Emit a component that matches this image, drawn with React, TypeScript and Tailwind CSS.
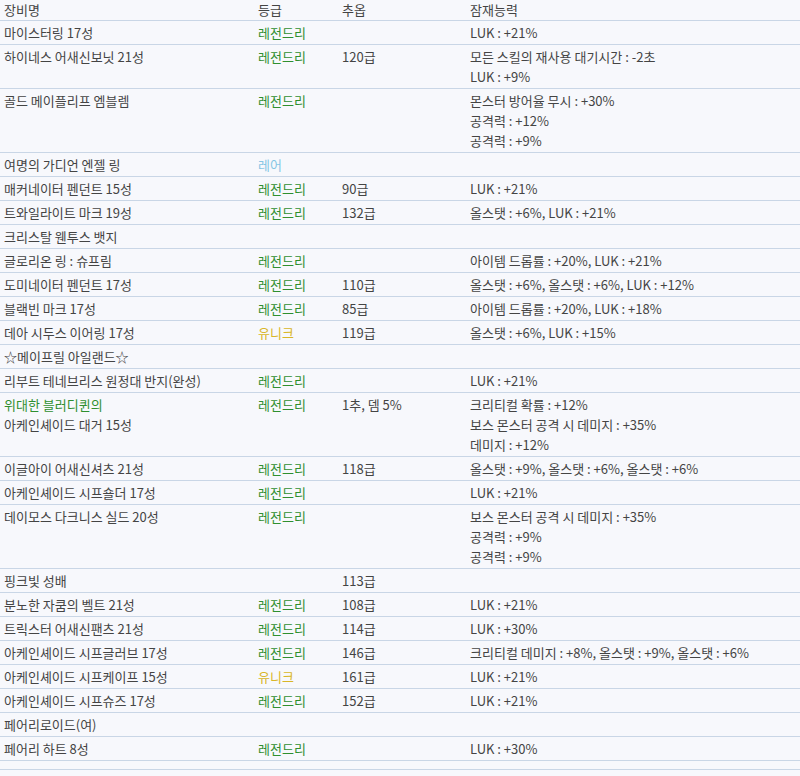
import React from "react";

type Row = { name: React.ReactNode; grade?: "L" | "U" | "R"; opt?: string; pot?: string[] };

const rows: Row[] = [
  { name: "마이스터링 17성", grade: "L", pot: ["LUK : +21%"] },
  { name: "하이네스 어새신보닛 21성", grade: "L", opt: "120급", pot: ["모든 스킬의 재사용 대기시간 : -2초", "LUK : +9%"] },
  { name: "골드 메이플리프 엠블렘", grade: "L", pot: ["몬스터 방어율 무시 : +30%", "공격력 : +12%", "공격력 : +9%"] },
  { name: "여명의 가디언 엔젤 링", grade: "R" },
  { name: "매커네이터 펜던트 15성", grade: "L", opt: "90급", pot: ["LUK : +21%"] },
  { name: "트와일라이트 마크 19성", grade: "L", opt: "132급", pot: ["올스탯 : +6%, LUK : +21%"] },
  { name: "크리스탈 웬투스 뱃지" },
  { name: "글로리온 링 : 슈프림", grade: "L", pot: ["아이템 드롭률 : +20%, LUK : +21%"] },
  { name: "도미네이터 펜던트 17성", grade: "L", opt: "110급", pot: ["올스탯 : +6%, 올스탯 : +6%, LUK : +12%"] },
  { name: "블랙빈 마크 17성", grade: "L", opt: "85급", pot: ["아이템 드롭률 : +20%, LUK : +18%"] },
  { name: "데아 시두스 이어링 17성", grade: "U", opt: "119급", pot: ["올스탯 : +6%, LUK : +15%"] },
  { name: "☆메이프릴 아일랜드☆" },
  { name: "리부트 테네브리스 원정대 반지(완성)", grade: "L", pot: ["LUK : +21%"] },
  {
    name: (
      <>
        <span className="text-[#2f8f2f]">위대한 블러디퀸의</span>
        <br />아케인셰이드 대거 15성
      </>
    ),
    grade: "L",
    opt: "1추, 뎀 5%",
    pot: ["크리티컬 확률 : +12%", "보스 몬스터 공격 시 데미지 : +35%", "데미지 : +12%"],
  },
  { name: "이글아이 어새신셔츠 21성", grade: "L", opt: "118급", pot: ["올스탯 : +9%, 올스탯 : +6%, 올스탯 : +6%"] },
  { name: "아케인셰이드 시프숄더 17성", grade: "L", pot: ["LUK : +21%"] },
  { name: "데이모스 다크니스 실드 20성", grade: "L", pot: ["보스 몬스터 공격 시 데미지 : +35%", "공격력 : +9%", "공격력 : +9%"] },
  { name: "핑크빛 성배", opt: "113급" },
  { name: "분노한 자쿰의 벨트 21성", grade: "L", opt: "108급", pot: ["LUK : +21%"] },
  { name: "트릭스터 어새신팬츠 21성", grade: "L", opt: "114급", pot: ["LUK : +30%"] },
  { name: "아케인셰이드 시프글러브 17성", grade: "L", opt: "146급", pot: ["크리티컬 데미지 : +8%, 올스탯 : +9%, 올스탯 : +6%"] },
  { name: "아케인셰이드 시프케이프 15성", grade: "U", opt: "161급", pot: ["LUK : +21%"] },
  { name: "아케인셰이드 시프슈즈 17성", grade: "L", opt: "152급", pot: ["LUK : +21%"] },
  { name: "페어리로이드(여)" },
  { name: "페어리 하트 8성", grade: "L", pot: ["LUK : +30%"] },
];

const gradeLabel = { L: "레전드리", U: "유니크", R: "레어" };
const gradeColor = { L: "text-[#2f8f2f]", U: "text-[#d9b628]", R: "text-[#86c6e4]" };

export default function App() {
  return (
    <div
      className="w-[800px] h-[776px] bg-[#f7f8fc] text-[#444] text-[13px] leading-[20px] overflow-hidden"
      style={{ fontFamily: '"Noto Sans CJK KR", "Noto Sans", sans-serif' }}
    >
      <div className="grid grid-cols-[254px_84px_128px_1fr] h-[21px] border-b border-[#c9d6e6] pl-1 items-start">
        <div>장비명</div>
        <div>등급</div>
        <div>추옵</div>
        <div>잠재능력</div>
      </div>
      {rows.map((r, i) => (
        <div key={i} className="grid grid-cols-[254px_84px_128px_1fr] pt-[2px] pb-[1px] border-b border-[#c9d6e6] pl-1">
          <div>{r.name}</div>
          <div className={r.grade ? gradeColor[r.grade] : ""}>{r.grade ? gradeLabel[r.grade] : ""}</div>
          <div>{r.opt}</div>
          <div>
            {r.pot?.map((p, j) => (
              <div key={j}>{p}</div>
            ))}
          </div>
        </div>
      ))}
      <div className="h-[9px] border-b border-[#c9d6e6]" />
    </div>
  );
}
